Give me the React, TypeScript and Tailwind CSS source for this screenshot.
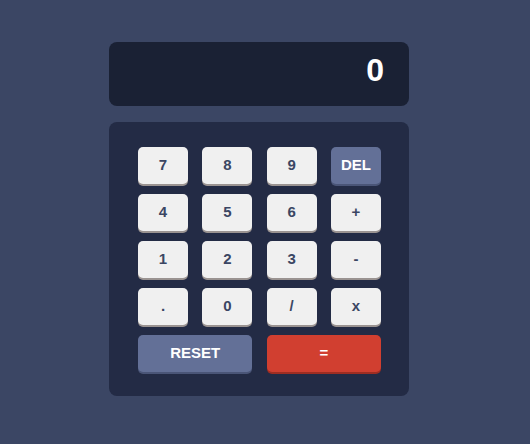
import React, { useState } from 'react';

type Key = { label: string; kind?: 'num' | 'del' | 'reset' | 'eq'; span?: boolean };

const keys: Key[] = [
  { label: '7' }, { label: '8' }, { label: '9' }, { label: 'DEL', kind: 'del' },
  { label: '4' }, { label: '5' }, { label: '6' }, { label: '+' },
  { label: '1' }, { label: '2' }, { label: '3' }, { label: '-' },
  { label: '.' }, { label: '0' }, { label: '/' }, { label: 'x' },
  { label: 'RESET', kind: 'reset', span: true },
  { label: '=', kind: 'eq', span: true },
];

export default function App() {
  const [display] = useState('0');

  const keyClass = (k: Key) => {
    switch (k.kind) {
      case 'del':
      case 'reset':
        return 'bg-[#637097] text-white shadow-[0_2px_0_#4a5577]';
      case 'eq':
        return 'bg-[#d13f30] text-white shadow-[0_2px_0_#9e2d22]';
      default:
        return 'bg-[#f0f0f0] text-[#3b4663] shadow-[0_2px_0_#9a9391]';
    }
  };

  return (
    <div
      className="w-full min-h-screen bg-[#3b4664] flex flex-col items-center pt-[42px] pr-[12px]"
      style={{ fontFamily: '"Liberation Sans", Arial, sans-serif' }}
    >
      <div className="w-[300px] h-[64px] rounded-lg bg-[#1a2134] flex items-center justify-end pr-[25px] pb-[8px]">
        <span className="text-[32px] font-bold text-white leading-none">{display}</span>
      </div>
      <div className="w-[300px] mt-4 rounded-lg bg-[#232b45] pt-[25px] pb-[24px] pl-[29px] pr-[28px]">
        <div className="grid grid-cols-4 gap-x-[14.3px] gap-y-[10px]">
          {keys.map((k) => (
            <button
              key={k.label}
              className={`h-[37px] rounded-[5px] text-[15px] font-bold flex items-center justify-center ${
                k.span ? 'col-span-2' : ''
              } ${keyClass(k)}`}
            >
              {k.label}
            </button>
          ))}
        </div>
      </div>
    </div>
  );
}
